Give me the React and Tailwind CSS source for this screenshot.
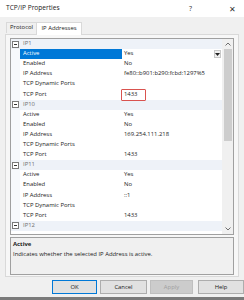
import React from "react";

const font = { fontFamily: '"Open Sans", "Noto Sans", sans-serif' };

const groups = [
  { name: "IP1", rows: [["Active", "Yes"], ["Enabled", "No"], ["IP Address", "fe80::b901:b290:fcbd:1297%5"], ["TCP Dynamic Ports", ""], ["TCP Port", "1433"]] },
  { name: "IP10", rows: [["Active", "Yes"], ["Enabled", "No"], ["IP Address", "169.254.111.218"], ["TCP Dynamic Ports", ""], ["TCP Port", "1433"]] },
  { name: "IP11", rows: [["Active", "Yes"], ["Enabled", "No"], ["IP Address", "::1"], ["TCP Dynamic Ports", ""], ["TCP Port", "1433"]] },
  { name: "IP12", rows: [] },
];

function Minus() {
  return (
    <div className="w-[7px] h-[7px] border border-[#7a7a7a] bg-white flex items-center justify-center">
      <div className="w-[3px] h-px bg-[#333]" />
    </div>
  );
}

export default function App() {
  return (
    <div className="w-[244px] h-[300px] bg-[#f0f0f0] flex flex-col overflow-hidden text-[#1a1a1a]" style={font}>
      {/* title bar */}
      <div className="h-[17px] bg-white flex items-center pl-[6px] shrink-0">
        <span className="text-[6.6px] leading-none">TCP/IP Properties</span>
        <span className="ml-auto text-[7px] leading-none text-[#333] mr-[37px]">?</span>
        <span className="text-[8px] leading-none text-[#333] mr-[8px]">✕</span>
      </div>
      {/* tabs */}
      <div className="h-[17px] flex items-end pl-[6px] shrink-0 relative z-10">
        <div className="h-[11px] w-[30px] flex items-center justify-center border-t border-l border-[#d9d9d9] text-[5.9px] leading-none mb-px">Protocol</div>
        <div className="h-[13px] w-[46px] flex items-center justify-center bg-white border border-b-0 border-[#d9d9d9] text-[5.9px] leading-none -mb-px">IP Addresses</div>
      </div>
      {/* panel */}
      <div className="mx-[5px] w-[234px] h-[243px] border border-[#d9d9d9] bg-[#f7f7f7] flex flex-col px-[4px] pt-[3px] shrink-0">
        {/* grid */}
        <div className="w-[224px] h-[197px] border border-[#a0a0a0] bg-white flex relative">
          <div className="flex-1 flex flex-col">
            {groups.map((g) => (
              <React.Fragment key={g.name}>
                <div className="h-[10.1px] flex items-center bg-[#eef2f8]">
                  <div className="w-[9px] flex items-center justify-center"><Minus /></div>
                  <span className="pl-[3px] text-[5.9px] leading-none text-[#6d6d6d]">{g.name}</span>
                </div>
                {g.rows.map(([k, v], i) => {
                  const sel = g.name === "IP1" && i === 0;
                  return (
                    <div key={k} className="h-[10.1px] flex items-stretch">
                      <div className="w-[9px] bg-[#f7f9fc]" />
                      <div className={`w-[102px] flex items-center pl-[3px] text-[5.9px] leading-none ${sel ? "bg-[#0078d7] text-white" : ""}`}>{k}</div>
                      <div className="flex-1 flex items-center pl-[2px] text-[5.9px] leading-none relative">
                        {v}
                        {sel && (
                          <div className="absolute right-[1px] top-[1px] w-[7px] h-[8px] bg-[#f0f0f0] border border-[#c8c8c8] flex items-center justify-center">
                            <svg width="5" height="3" viewBox="0 0 5 3"><path d="M0 0h5L2.5 3z" fill="#222" /></svg>
                          </div>
                        )}
                      </div>
                    </div>
                  );
                })}
              </React.Fragment>
            ))}
          </div>
          {/* scrollbar */}
          <div className="w-[11px] bg-[#f0f0f0] flex flex-col items-center">
            <div className="h-[10px] flex items-center justify-center">
              <svg width="6" height="4" viewBox="0 0 6 4"><path d="M0.5 3.5L3 1l2.5 2.5" fill="none" stroke="#606060" strokeWidth="0.9" /></svg>
            </div>
            <div className="w-[8px] h-[92px] bg-[#cdcdcd]" />
            <div className="flex-1" />
            <div className="h-[10px] flex items-center justify-center">
              <svg width="6" height="4" viewBox="0 0 6 4"><path d="M0.5 0.5L3 3l2.5-2.5" fill="none" stroke="#606060" strokeWidth="0.9" /></svg>
            </div>
          </div>
          {/* highlight */}
          <div className="absolute left-[110px] top-[50px] w-[25px] h-[12px] border-[1.5px] border-[#d9534f] rounded-[1px]" />
        </div>
        {/* description */}
        <div className="mt-[2px] w-[224px] h-[38px] border border-[#a0a0a0] bg-[#f0f0f0] flex flex-col pl-[2px] pt-[3px] gap-[3px]">
          <span className="text-[5.9px] leading-[7px] font-bold">Active</span>
          <span className="text-[5.9px] leading-[7px]">Indicates whether the selected IP Address is active.</span>
        </div>
      </div>
      {/* buttons */}
      <div className="flex pl-[52px] gap-[3px] mt-[3px] shrink-0">
        <div className="w-[45px] h-[14px] bg-[#e1e1e1] border border-[#0078d7] flex items-center justify-center text-[5.9px]">OK</div>
        <div className="w-[47px] h-[14px] bg-[#e1e1e1] border border-[#adadad] flex items-center justify-center text-[5.9px]">Cancel</div>
        <div className="w-[43px] h-[14px] bg-[#cccccc] border border-[#bfbfbf] flex items-center justify-center text-[5.9px] text-[#a0a0a0]">Apply</div>
        <div className="w-[46px] h-[14px] bg-[#e1e1e1] border border-[#adadad] flex items-center justify-center text-[5.9px] ml-[2px]">Help</div>
      </div>
      <div className="flex-1" />
      <div className="h-[3px] bg-[#7a7a7a] shrink-0" />
    </div>
  );
}
